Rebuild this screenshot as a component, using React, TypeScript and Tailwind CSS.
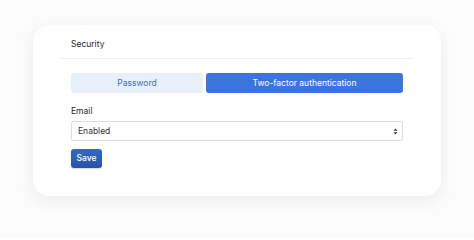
import React, { useState } from 'react';

const font = { fontFamily: 'Inter, "Noto Sans", sans-serif' };

export default function App() {
    const [tab, setTab] = useState<'password' | '2fa'>('2fa');
    const [value, setValue] = useState('Enabled');

    return (
        <div className="w-[474px] h-[238px] bg-[#fcfcfc] pt-[25px] pl-[33px]" style={font}>
            <div className="w-[408px] h-[171px] bg-white rounded-[16px] shadow-[0_4px_18px_rgba(0,0,0,0.07)] px-[27px]">
                <div className="h-[34px] flex items-end pb-[10px] px-[11px] border-b border-[#f0f0f0]">
                    <span className="text-[8.5px] leading-none text-[#1f1f1f]">Security</span>
                </div>

                <div className="px-[11px] pt-[14px]">
                    <div className="flex gap-[3px] h-[20px]">
                        <button
                            onClick={() => setTab('password')}
                            className={
                                tab === 'password'
                                    ? 'w-[132px] rounded-[3px] bg-[#3b75dc] text-white text-[8.5px]'
                                    : 'w-[132px] rounded-[3px] bg-[#e8f0fc] text-[#3f6ec2] text-[8.5px]'
                            }
                        >
                            Password
                        </button>
                        <button
                            onClick={() => setTab('2fa')}
                            className={
                                tab === '2fa'
                                    ? 'flex-1 rounded-[3px] bg-[#3b75dc] text-white text-[8.5px]'
                                    : 'flex-1 rounded-[3px] bg-[#e8f0fc] text-[#3f6ec2] text-[8.5px]'
                            }
                        >
                            Two-factor authentication
                        </button>
                    </div>

                    <label className="block mt-[13px] text-[8.5px] leading-[10px] text-[#1f1f1f]">Email</label>
                    <div className="relative mt-[5px]">
                        <select
                            value={value}
                            onChange={(e) => setValue(e.target.value)}
                            className="block w-full h-[20px] appearance-none rounded-[2px] border border-[#dedede] bg-white pl-[6px] text-[8.5px] text-[#333] outline-none"
                        >
                            <option>Enabled</option>
                            <option>Disabled</option>
                        </select>
                        <svg
                            className="absolute right-[5px] top-[6.5px] pointer-events-none"
                            width="5"
                            height="7"
                            viewBox="0 0 5 7"
                        >
                            <path d="M2.5 0.5 L4.5 2.8 H0.5 Z" fill="#333" />
                            <path d="M2.5 6.5 L4.5 4.2 H0.5 Z" fill="#333" />
                        </svg>
                    </div>

                    <button className="block mt-[8px] h-[19px] w-[31px] rounded-[3px] bg-gradient-to-b from-[#3569c8] to-[#2553a8] text-white text-[8.5px] font-medium shadow-[0_1px_1px_rgba(0,0,0,0.15)]">
                        Save
                    </button>
                </div>
            </div>
        </div>
    );
}
